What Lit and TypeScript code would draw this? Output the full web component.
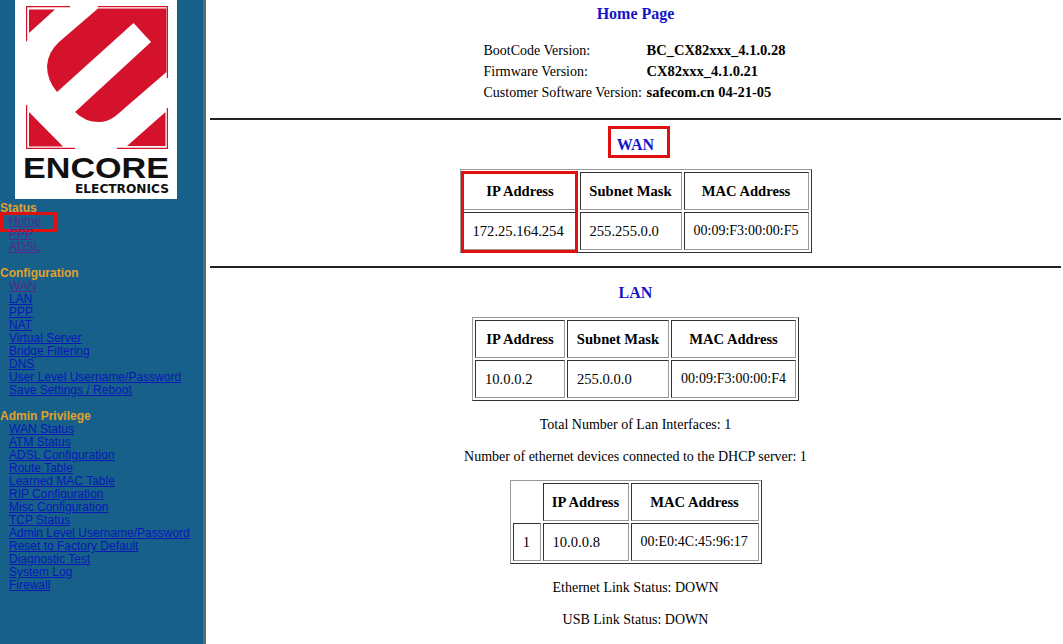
import { LitElement, html, css, svg } from "lit";
import { customElement } from "lit/decorators.js";

const status = [["PPP", true], ["ADSL", true]] as [string, boolean][];
const config = [["WAN", true], ["LAN", false], ["PPP", false], ["NAT", false], ["Virtual Server", false], ["Bridge Filtering", false], ["DNS", false], ["User Level Username/Password", false], ["Save Settings / Reboot", false]] as [string, boolean][];
const admin = ["WAN Status", "ATM Status", "ADSL Configuration", "Route Table", "Learned MAC Table", "RIP Configuration", "Misc Configuration", "TCP Status", "Admin Level Username/Password", "Reset to Factory Default", "Diagnostic Test", "System Log", "Firewall"].map((t) => [t, false]) as [string, boolean][];

const logo = svg`
  <rect width="162" height="199" fill="#fff"/>
  <g fill="#d4122c">
    <path d="M11 6h44v1.200H12.200v34H11zM83 6h70v72h-1.200V7.200H83zM11 105h1.200v42.800H60V149H11zM151.800 108h1.200v41H102v-1.200h49.800z"/>
    <path d="M14 9.500H40L14 33z"/>
    <path d="M83 8.500H151.500V72L100 116.500Q92 122 84 122Q70 122 60 112L136 42L118.500 23L42 92Q32 80 32 66Q33 52 44 42z"/>
    <path d="M14 112L48 146.500H14z"/>
    <path d="M150.500 112V146H112z"/>
  </g>
  <text x="8" y="178" font-family="'Liberation Sans',sans-serif" font-weight="700" font-size="29.500" textLength="146" lengthAdjust="spacingAndGlyphs" fill="#111">ENCORE</text>
  <text x="60" y="193" font-family="'DejaVu Sans',sans-serif" font-weight="700" font-size="13" textLength="94" lengthAdjust="spacingAndGlyphs" fill="#111">ELECTRONICS</text>
`;

@customElement("app-root")
export class AppRoot extends LitElement {
  static styles = css`
    :host { display: flex; width: 1063px; height: 644px; overflow: hidden; background: #fff; font-family: "Liberation Serif", "Times New Roman", serif; color: #000; }
    .side { width: 203px; flex: none; background: #17608a; border-right: 3px solid #5c6a72; font-family: "Liberation Sans", Arial, sans-serif; font-size: 12px; line-height: 13px; }
    .logo { display: block; margin-left: 15px; width: 162px; height: 199px; margin-bottom: 3px; }
    .sec { font-weight: 700; color: #e0a02e; }
    .group { margin-bottom: 13px; }
    .link { display: block; position: relative; padding-left: 9px; }
    .link a { color: #0818b8; text-decoration: underline; }
    .link a.seen { color: #55288e; }
    .mark { position: absolute; left: 0; top: -3px; width: 51px; height: 14px; border: 3px solid #e01010; }
    main { flex: 1; display: flex; flex-direction: column; align-items: center; padding: 0 2px 0 4px; font-size: 14px; }
    h2 { margin: 0; font-size: 16px; font-weight: 700; color: #1414c8; line-height: 18px; }
    .title { margin-top: 5px; }
    .info { margin: 17px 0 0 2px; border-spacing: 0; line-height: 21px; }
    .info td { padding: 0 4px 0 0; }
    .info td:first-child { width: 159px; }
    .info td:last-child { font-weight: 700; font-size: 14.5px; }
    hr { align-self: stretch; width: 100%; height: 2px; margin: 15px 0 0; border: 0; background: #222; }
    hr.second { margin-top: 13px; }
    .wan { margin: 6px 0 0 6px; padding: 7px 11px 1px 5px; width: 40px; text-align: center; border: 3px solid #e01010; box-sizing: content-box; }
    .lan { margin-top: 16px; }
    .grid { border-collapse: separate; border-spacing: 2px; border: 1px solid; border-color: #999 #333 #333 #999; line-height: 16px; table-layout: fixed; }
    .grid td, .grid th { border: 1px solid; border-color: #333 #999 #999 #333; height: 38px; padding: 0 0 0 9px; text-align: left; font-weight: 400; box-sizing: border-box; font-size: 14.6px; white-space: nowrap; }
    .grid th { font-weight: 700; text-align: center; padding: 0; font-size: 14.6px; }
    .grid td.mac { font-size: 14px; }
    .grid th.blank { border-color: transparent; }
    .grid td.num { text-align: center; padding: 0; }
    .t1 { margin-top: 11px; }
    .t2 { margin-top: 15px; }
    .t3 { margin-top: 15px; }
    .w27 { width: 28px; }
    .w87 { width: 86px; }
    .w89 { width: 90px; }
    .w101 { width: 102px; }
    .w114 { width: 115px; }
    .w124 { width: 125px; }
    .w128 { width: 128px; }
    .anchor { position: relative; }
    .ipbox { position: absolute; left: -3px; top: -2px; width: 111px; height: 76px; border: 3px solid #e01010; }
    .p { margin: 16px 0 0; line-height: 16px; }
  `;

  private links(items: [string, boolean][]) {
    return items.map(([t, seen]) => html`<span class="link"><a class=${seen ? "seen" : ""} href="#">${t}</a></span>`);
  }

  render() {
    return html`
      <nav class="side">
        <svg class="logo" viewBox="0 0 162 199">${logo}</svg>
        <div class="group">
          <div class="sec">Status</div>
          <span class="link"><a class="seen" href="#">Home</a><span class="mark"></span></span>
          ${this.links(status)}
        </div>
        <div class="group"><div class="sec">Configuration</div>${this.links(config)}</div>
        <div class="group"><div class="sec">Admin Privilege</div>${this.links(admin)}</div>
      </nav>
      <main>
        <h2 class="title">Home Page</h2>
        <table class="info">
          <tr><td>BootCode Version:</td><td>BC_CX82xxx_4.1.0.28</td></tr>
          <tr><td>Firmware Version:</td><td>CX82xxx_4.1.0.21</td></tr>
          <tr><td>Customer Software Version:</td><td>safecom.cn 04-21-05</td></tr>
        </table>
        <hr />
        <h2 class="wan">WAN</h2>
        <table class="grid t1">
          <tr><th class="w114 anchor">IP Address<span class="ipbox"></span></th><th class="w101">Subnet Mask</th><th class="w124">MAC Address</th></tr>
          <tr><td>172.25.164.254</td><td>255.255.0.0</td><td class="mac">00:09:F3:00:00:F5</td></tr>
        </table>
        <hr class="second" />
        <h2 class="lan">LAN</h2>
        <table class="grid t2">
          <tr><th class="w89">IP Address</th><th class="w101">Subnet Mask</th><th class="w124">MAC Address</th></tr>
          <tr><td>10.0.0.2</td><td>255.0.0.0</td><td class="mac">00:09:F3:00:00:F4</td></tr>
        </table>
        <p class="p">Total Number of Lan Interfaces: 1</p>
        <p class="p">Number of ethernet devices connected to the DHCP server: 1</p>
        <table class="grid t3">
          <tr><th class="blank w27"></th><th class="w87">IP Address</th><th class="w128">MAC Address</th></tr>
          <tr><td class="num">1</td><td>10.0.0.8</td><td class="mac">00:E0:4C:45:96:17</td></tr>
        </table>
        <p class="p">Ethernet Link Status: DOWN</p>
        <p class="p">USB Link Status: DOWN</p>
      </main>
    `;
  }
}
